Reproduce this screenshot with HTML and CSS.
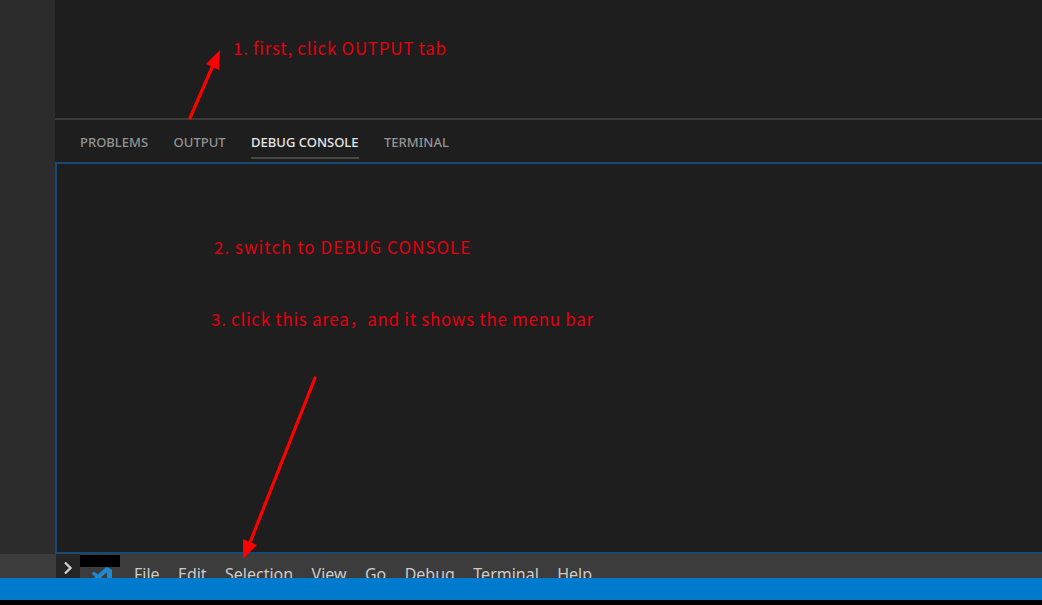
FILE: index.html
```html
<!DOCTYPE html>
<html>
<head>
<meta charset="utf-8">
<link rel="stylesheet" href="styles.css">
</head>
<body>
<div class="workbench">
  <div class="top">
    <div class="activity"></div>
    <div class="main">
      <div class="editor"></div>
      <div class="tabs">
        <div class="tab">Problems</div>
        <div class="tab">Output</div>
        <div class="tab active">Debug Console</div>
        <div class="tab">Terminal</div>
      </div>
      <div class="console"></div>
    </div>
  </div>
  <div class="menubar">
    <div class="spacer"></div>
    <div class="prompt">
      <svg width="10" height="14" viewBox="0 0 10 14"><path d="M2 1.5 7.5 7 2 12.5" fill="none" stroke="#cfcfcf" stroke-width="2.4"/></svg>
    </div>
    <div class="appicon">
      <svg class="logo" width="20" height="20" viewBox="0 0 24 24"><path fill="#1f8ad2" d="M23.15 2.587L18.21.21a1.494 1.494 0 0 0-1.705.29l-9.46 8.63-4.12-3.128a.999.999 0 0 0-1.276.057L.327 7.261A1 1 0 0 0 .326 8.74L3.899 12 .326 15.26a1 1 0 0 0 .001 1.479L1.65 17.940a.999.999 0 0 0 1.276.057l4.12-3.128 9.46 8.63a1.492 1.492 0 0 0 1.704.29l4.942-2.377A1.5 1.5 0 0 0 24 20.06V3.939a1.5 1.5 0 0 0-.85-1.352zm-5.146 14.861L10.826 12l7.178-5.448v10.896z"/></svg>
      <div class="redact"></div>
    </div>
    <div class="menus">
      <span class="menu">File</span>
      <span class="menu">Edit</span>
      <span class="menu">Selection</span>
      <span class="menu">View</span>
      <span class="menu">Go</span>
      <span class="menu">Debug</span>
      <span class="menu">Terminal</span>
      <span class="menu">Help</span>
    </div>
  </div>
  <div class="statusbar"></div>
  <div class="footer"></div>
</div>

<div class="note note1">1. first, click OUTPUT tab</div>
<div class="note note2">2. switch to DEBUG CONSOLE</div>
<div class="note note3">3. click this area，and it shows the menu bar</div>

<svg class="arrows" width="1042" height="605" viewBox="0 0 1042 605">
  <line x1="190" y1="118" x2="214" y2="63" stroke="#f00" stroke-width="3.2" stroke-linecap="round"/>
  <polygon points="220,50 219,70 206,64" fill="#f00"/>
  <line x1="315" y1="378" x2="249" y2="545" stroke="#f00" stroke-width="3.2" stroke-linecap="round"/>
  <polygon points="243,559 257,545 243,539" fill="#f00"/>
</svg>
</body>
</html>
```
FILE: styles.css
```css
html, body {
  margin: 0;
  padding: 0;
}
body {
  width: 1042px;
  height: 605px;
  overflow: hidden;
  background: #1e1e1e;
  position: relative;
  font-family: "Noto Sans", "DejaVu Sans", sans-serif;
}
.workbench {
  display: flex;
  flex-direction: column;
  width: 1042px;
  height: 605px;
}
.top {
  display: flex;
  height: 554px;
}
.activity {
  width: 55px;
  background: #2c2c2c;
}
.main {
  flex: 1;
  display: flex;
  flex-direction: column;
  background: #1e1e1e;
}
.editor {
  height: 118px;
  border-bottom: 2px solid #3a3a3a;
}
.tabs {
  height: 42px;
  display: flex;
  gap: 25.5px;
  padding-left: 25px;
}
.tab {
  padding-top: 15px;
  padding-bottom: 8px;
  height: 14px;
  line-height: 14px;
  font-size: 13px;
  font-weight: 500;
  letter-spacing: 0;
  text-transform: uppercase;
  color: #939393;
  border-bottom: 2px solid transparent;
  white-space: nowrap;
}
.tab.active {
  color: #e6e6e6;
  border-bottom-color: #474747;
}
.console {
  flex: 1;
  border-top: 2px solid #164a72;
  border-left: 2px solid #164a72;
  border-bottom: 2px solid #164a72;
}
.menubar {
  height: 24px;
  display: flex;
  background: #3c3c3c;
  overflow: hidden;
}
.spacer {
  width: 56px;
}
.prompt {
  width: 24px;
  background: #252526;
  display: flex;
  justify-content: center;
  padding-top: 7px;
  box-sizing: border-box;
}
.appicon {
  width: 44px;
  position: relative;
}
.logo {
  position: absolute;
  left: 12px;
  top: 13px;
}
.redact {
  position: absolute;
  left: 0;
  top: 1px;
  width: 40px;
  height: 12px;
  background: #000;
}
.menus {
  display: flex;
  gap: 18.4px;
  padding-left: 10px;
  padding-top: 12px;
}
.menu {
  font-size: 16px;
  line-height: 16px;
  color: #cccccc;
}
.statusbar {
  height: 22px;
  background: #007acc;
}
.footer {
  height: 5px;
  background: #000;
}
.note {
  position: absolute;
  color: #e3000f;
  font-family: "Noto Sans CJK SC", "Noto Sans", sans-serif;
  font-size: 17px;
  line-height: 20px;
  letter-spacing: 0.7px;
  white-space: nowrap;
}
.note2 { letter-spacing: 1px; }
.note1 { left: 233px; top: 38px; }
.note2 { left: 214px; top: 237px; }
.note3 { left: 211px; top: 309px; }
.arrows {
  position: absolute;
  left: 0;
  top: 0;
  pointer-events: none;
}
```
